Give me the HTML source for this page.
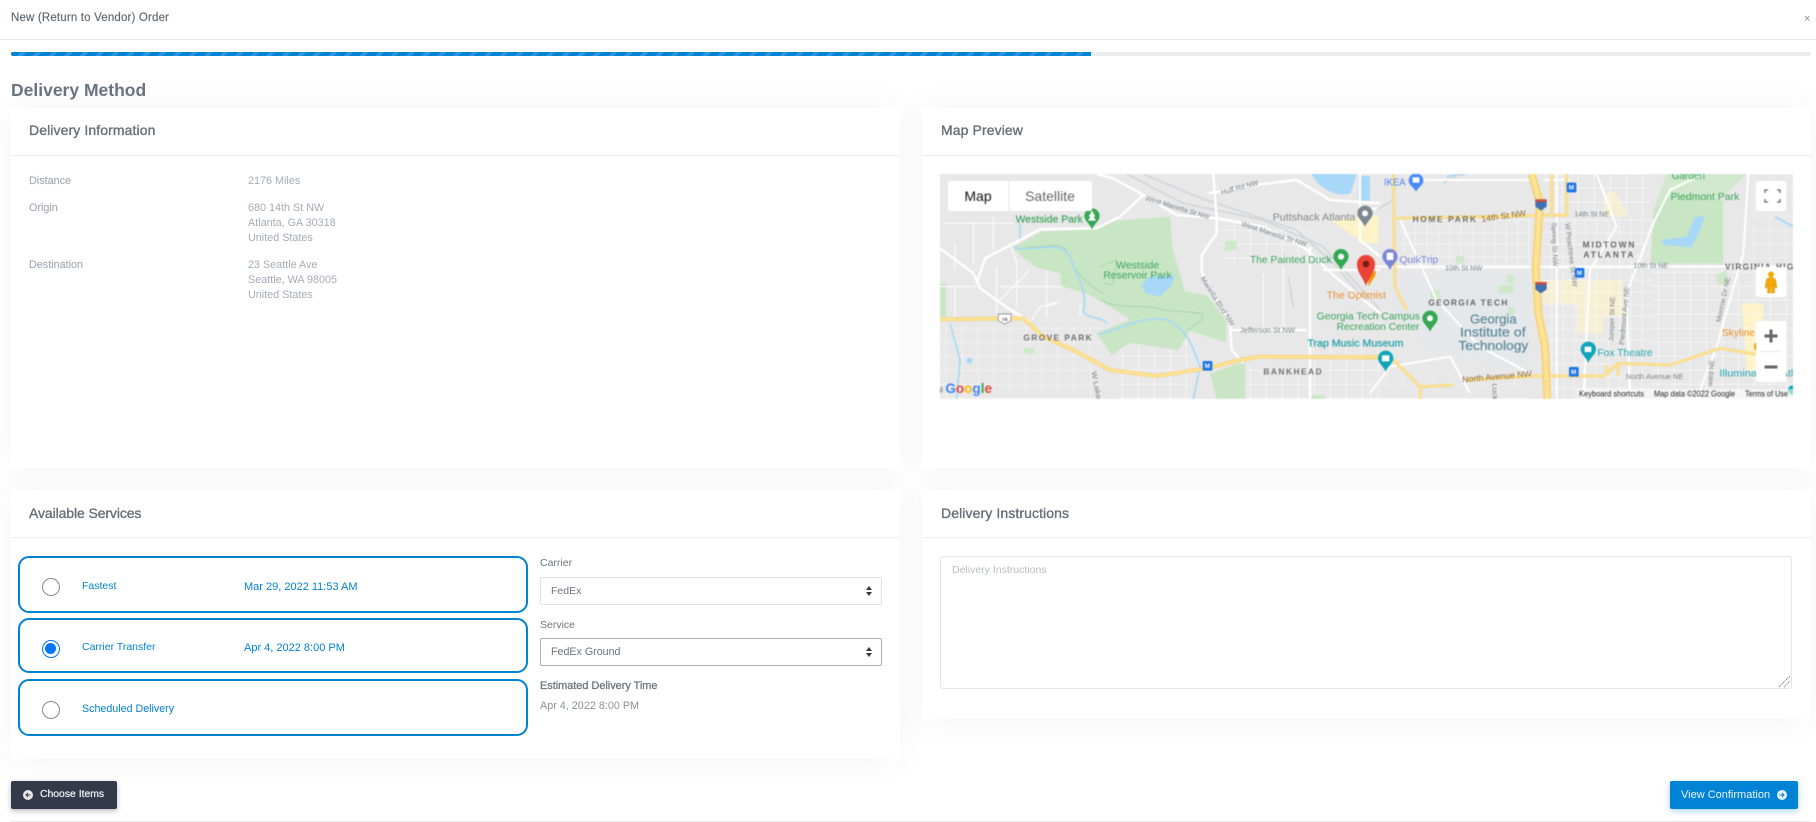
<!DOCTYPE html>
<html lang="en"><head><meta charset="utf-8"><title>New (Return to Vendor) Order</title>
<style>
html,body{margin:0;padding:0;background:#fff}
body{width:1816px;height:822px;position:relative;overflow:hidden;font-family:"Liberation Sans",sans-serif;color:#5f6a74}
.a{position:absolute}
.t{position:absolute;white-space:nowrap;line-height:16px;height:16px;font-size:11px}
.panel{position:absolute;background:#fff;box-shadow:0 0 30px 0 rgba(82,63,105,.06)}
.hr{position:absolute;height:1px;background:#ebedf2}
.h{font-size:14px;letter-spacing:.1px;color:#666f79;-webkit-text-stroke:.35px #666f79}
.lab{color:#a3acb5;font-size:10.8px;-webkit-text-stroke:.15px #a3acb5}
.val{color:#a3acb5;font-size:10.8px}
.card{position:absolute;left:18px;width:506px;border:2px solid #0082d5;border-radius:11px;height:53px;box-sizing:content-box}
.radio{position:absolute;left:42px;width:16px;height:16px;border:1px solid #8a8a8a;border-radius:50%;background:#fff}
.blue{color:#0082d5}
.sel{position:absolute;left:540px;width:340px;height:26px;border:1px solid #dfe1e6;border-radius:2px;background:#fff}
.btn{position:absolute;top:781px;height:28px;border-radius:2px;color:#fff}
svg text{font-family:"Liberation Sans",sans-serif}
</style></head><body>

<div class="t" style="left:11px;top:10px;font-size:11.5px;letter-spacing:.17px;color:#5d6770;-webkit-text-stroke:.15px #5d6770">New (Return to Vendor) Order</div>
<div class="t" style="left:1804px;top:11px;font-size:11px;color:#8c8c8c">×</div>
<div class="hr" style="left:0;top:39px;width:1816px;background:#e6e8ec"></div>

<div class="a" style="left:11px;top:52px;width:1800px;height:4px;background:#e9ecef;border-radius:2px"></div>
<div class="a" style="left:11px;top:52px;width:1080px;height:4px;border-radius:2px 0 0 2px;background:repeating-linear-gradient(135deg,#0082d5 0,#0082d5 7px,#2a96dc 7px,#2a96dc 11px)"></div>

<div class="t" style="left:11px;top:80px;height:20px;line-height:20px;font-size:17.5px;font-weight:bold;color:#6a7480">Delivery Method</div>

<div class="panel" style="left:11px;top:108px;width:889px;height:360px"></div>
<div class="panel" style="left:922px;top:108px;width:889px;height:360px"></div>
<div class="panel" style="left:11px;top:490px;width:889px;height:269px"></div>
<div class="panel" style="left:922px;top:490px;width:889px;height:229px"></div>

<div class="hr" style="left:11px;top:155px;width:889px"></div>
<div class="hr" style="left:922px;top:155px;width:889px"></div>
<div class="hr" style="left:11px;top:537px;width:889px"></div>
<div class="hr" style="left:922px;top:537px;width:889px"></div>

<div class="t h" style="left:29px;top:122px">Delivery Information</div>
<div class="t h" style="left:941px;top:122px">Map Preview</div>
<div class="t h" style="left:29px;top:505px;letter-spacing:-.1px">Available Services</div>
<div class="t h" style="left:941px;top:505px">Delivery Instructions</div>

<div class="t lab" style="left:29px;top:173px">Distance</div>
<div class="t val" style="left:248px;top:173px">2176 Miles</div>
<div class="t lab" style="left:29px;top:200px">Origin</div>
<div class="t val" style="left:248px;top:200px">680 14th St NW</div>
<div class="t val" style="left:248px;top:215px">Atlanta, GA 30318</div>
<div class="t val" style="left:248px;top:230px">United States</div>
<div class="t lab" style="left:29px;top:257px">Destination</div>
<div class="t val" style="left:248px;top:257px">23 Seattle Ave</div>
<div class="t val" style="left:248px;top:272px">Seattle, WA 98005</div>
<div class="t val" style="left:248px;top:287px">United States</div>

<svg class="a" style="left:940px;top:174px;filter:blur(.5px)" width="853" height="225" viewBox="940 174 853 225" xmlns="http://www.w3.org/2000/svg">
<defs>
<pattern id="g1" width="48" height="42" patternUnits="userSpaceOnUse"><path d="M0 0H48M0 0V42" stroke="#fff" stroke-width="3" fill="none"/></pattern>
<pattern id="g2" width="34" height="36" patternUnits="userSpaceOnUse"><path d="M0 0H34M0 0V36" stroke="#fff" stroke-width="3" fill="none"/></pattern>
</defs>
<rect x="940" y="174" width="853" height="225" fill="#e8e8e8"/>
<!-- left part, coordinates of 3x crop at 930,160 -->
<g transform="translate(930 160) scale(.33333)">
<rect x="30" y="370" width="18" height="100" fill="#c8e6c4"/>
<path d="M1200 180L1345 165V240H1290L1250 215Z" fill="#fdf2c8"/>
<rect x="1285" y="240" width="60" height="10" fill="#fdf2c8"/>
<rect x="1130" y="560" width="220" height="160" fill="url(#g1)" opacity=".9"/>
<rect x="900" y="620" width="440" height="100" fill="url(#g1)"/>
<rect x="870" y="185" width="270" height="130" fill="url(#g1)"/>
<rect x="30" y="490" width="180" height="230" fill="url(#g1)" opacity=".75"/>
<rect x="210" y="500" width="310" height="220" fill="url(#g1)" opacity=".75"/>
<rect x="560" y="520" width="220" height="200" fill="url(#g1)"/>
<path d="M40 190H250M130 190V310M190 170V270M75 250V330M75 380V470M30 380H140M200 320V460M260 300V440M300 330L210 420M350 300V470M210 380H460M350 440L390 425L330 440L305 480M240 250L260 310M450 430V470M1000 340V500M1060 320V500" stroke="#fff" stroke-width="3" fill="none"/>
<path d="M250 262L335 215L480 208L560 182L722 170L725 255L765 395L830 405L888 480V548L780 512L745 570L600 548L545 585L500 520L600 478L548 445L470 400L392 378V340L325 325L275 290Z" fill="#c8e6c4"/>
<path d="M840 640L945 605V716H860Z" fill="#c8e6c4"/>
<rect x="885" y="243" width="35" height="28" fill="#cfe8cb"/>
<rect x="282" y="563" width="30" height="18" fill="#cfe8cb"/>
<rect x="1145" y="705" width="40" height="15" fill="#cfe8cb"/>
<path d="M285 260C340 270 390 235 415 280C430 340 490 385 520 400M510 320L560 300L548 375L520 370M515 420C560 450 640 430 700 450C780 460 830 450 815 480L775 510" stroke="#7cbf83" stroke-width="2" stroke-dasharray="5 3" fill="none"/>
<path d="M250 262C300 280 395 235 420 290C440 345 475 400 460 455C480 480 520 470 530 492M505 522C560 515 620 470 700 478C760 488 790 560 810 620L790 716M60 490L90 600L80 716M270 190V240" stroke="#a8d8f8" stroke-width="5" fill="none"/>
<path d="M635 372L660 350L735 345L725 375L690 410L645 400Z" fill="#a8d8f8"/>
<path d="M1145 42H1280L1262 100C1225 112 1170 92 1145 42Z" fill="#a8d8f8"/>
<path d="M1285 48H1320V122H1285Z" fill="#a8d8f8"/>
<circle cx="118" cy="602" r="9" fill="#a8d8f8"/>
<path d="M590 42L760 130L1000 180L1180 260L1350 450M640 42L800 110L1100 210L1210 310L1350 470M1075 350L1090 440" stroke="#d3d5d8" stroke-width="5" fill="none"/>
<path d="M30 265L130 340L150 385L235 445L300 485M140 370L165 295L270 240L330 208L500 205L570 170L640 105L550 55L500 42M640 105L740 165L860 175L1000 200L1125 265L1215 350L1350 460M850 42L860 175V220L815 285V335L900 490L905 570L940 610M905 510H1130M1140 260V716M835 100L1000 72L1100 60L1200 120L1350 130M1290 42V240L1350 290M1180 330H1350M1290 150L1350 145" stroke="#fff" stroke-width="7" fill="none"/>
<path d="M30 478L280 475L340 530L430 570L540 630L680 648L830 625L930 600L990 590L1350 592" stroke="#f3d27a" stroke-width="12" fill="none"/>
<path d="M30 478L280 475L340 530L430 570L540 630L680 648L830 625L930 600L990 590L1350 592" stroke="#fde293" stroke-width="8" fill="none"/>

<g fill="#3aa35b">
<text x="257" y="188" textLength="201" lengthAdjust="spacingAndGlyphs" font-size="30" stroke="#3aa35b" stroke-width=".5">Westside Park</text>
<text x="558" y="326" textLength="130" lengthAdjust="spacingAndGlyphs" font-size="31">Westside</text>
<text x="520" y="356" textLength="205" lengthAdjust="spacingAndGlyphs" font-size="31">Reservoir Park</text>
<text x="960" y="309" textLength="245" lengthAdjust="spacingAndGlyphs" font-size="31">The Painted Duck</text>
</g>
<text x="1028" y="181" textLength="248" lengthAdjust="spacingAndGlyphs" font-size="31" fill="#80868b">Puttshack Atlanta</text>
<text x="280" y="541" textLength="205" font-size="25" fill="#6f6f6f" font-weight="bold">GROVE PARK</text>
<text x="1000" y="643" textLength="175" font-size="25" fill="#6f6f6f" font-weight="bold">BANKHEAD</text>
<g font-size="21" fill="#7b7f84">
<text transform="translate(875 104) rotate(-15)" textLength="115" lengthAdjust="spacingAndGlyphs">Huff Rd NW</text>
<text transform="translate(645 120) rotate(17)" textLength="200" lengthAdjust="spacingAndGlyphs">West Marietta St NW</text>
<text transform="translate(933 197) rotate(18)" textLength="205" lengthAdjust="spacingAndGlyphs">West Marietta St NW</text>
<text transform="translate(812 355) rotate(58)" textLength="170" lengthAdjust="spacingAndGlyphs">Marietta Blvd NW</text>
<text x="930" y="518" textLength="165" lengthAdjust="spacingAndGlyphs">Jefferson St NW</text>
<text transform="translate(485 635) rotate(80)" textLength="85" lengthAdjust="spacingAndGlyphs">W Lake</text>
</g>
<path d="M205 462H243V482L224 492L205 482Z" fill="#fff" stroke="#777" stroke-width="2"/>
<text x="224" y="483" font-size="15" fill="#555" text-anchor="middle" font-weight="bold">78</text>
<rect x="818" y="603" width="29" height="29" rx="4" fill="#1a73e8"/>
<text x="832" y="624" font-size="19" fill="#fff" text-anchor="middle" font-weight="bold">M</text>
<path d="M486 208C478 190 463 182 463 168A23 23 0 0 1 509 168C509 182 494 190 486 208Z" fill="#34a853"/>
<path d="M486 152L476 170H482L474 182H498L490 170H496Z" fill="#fff"/>
<path d="M1233 330C1225 312 1210 304 1210 290A23 23 0 0 1 1256 290C1256 304 1241 312 1233 330Z" fill="#34a853"/>
<circle cx="1233" cy="290" r="9" fill="#fff"/>
<path d="M1305 200C1297 182 1282 174 1282 160A23 23 0 0 1 1328 160C1328 174 1313 182 1305 200Z" fill="#7b868f"/>
<circle cx="1305" cy="160" r="9" fill="#fff"/>
<text x="28" y="697" font-size="22" fill="#555">il</text>
<text x="46" y="699" font-size="42" font-weight="bold" textLength="140" lengthAdjust="spacingAndGlyphs"><tspan fill="#4285f4">G</tspan><tspan fill="#ea4335">o</tspan><tspan fill="#fbbc05">o</tspan><tspan fill="#4285f4">g</tspan><tspan fill="#34a853">l</tspan><tspan fill="#ea4335">e</tspan></text>
</g>

<!-- right part, coordinates of 3x crop at 1370,160 -->
<g transform="translate(1370 160) scale(.33333)">
<path d="M100 350L480 340V640L330 610L160 560L60 420Z" fill="#e5e8eb"/>
<path d="M520 360H760V470H700V520H620V430H520ZM700 100L735 95L775 170H700Z" fill="#fdf2c8" opacity=".65"/>
<path d="M1115 430H1180V630H1130Z" fill="#fdf2c8"/>
<rect x="540" y="42" width="300" height="125" fill="url(#g1)"/>
<rect x="80" y="180" width="400" height="150" fill="url(#g2)" opacity=".85"/>
<rect x="520" y="170" width="330" height="550" fill="url(#g2)" opacity=".85"/>
<rect x="845" y="320" width="425" height="400" fill="url(#g1)"/>
<rect x="1130" y="42" width="140" height="280" fill="url(#g1)" opacity=".7"/>
<rect x="0" y="640" width="480" height="80" fill="url(#g1)" opacity=".7"/>
<path d="M890 42H1130L1060 110L850 150Z" fill="#d2e8ce"/>
<path d="M850 150L910 100L1060 120V310H842Z" fill="#c8e6c4"/>
<path d="M875 240L950 230L975 170L1005 170L985 222L965 262L880 255Z" fill="#a8d8f8"/>
<path d="M1035 345L1070 330L1075 370L1045 375Z" fill="#cfe8cb"/>
<path d="M385 375H430V400H385ZM410 345H430V370H410ZM258 288H282V310H258ZM415 440H432V465H415ZM180 390H210V415H180Z" fill="#cfe8cb"/>
<path d="M1215 170L1270 200M230 50L285 42" stroke="#a8d8f8" stroke-width="6" fill="none"/>
<path d="M70 120L20 150M270 42L220 70" stroke="#d3d5d8" stroke-width="5" fill="none"/>
<path d="M-10 320H1270M90 180L200 420L330 560L480 640M0 700L60 620L240 590L300 700M560 42V716M680 42L740 200L660 330L640 716M780 716L770 400L850 190L900 90L1000 42M1135 42L1120 280L1040 560L980 716M155 60H480M520 60H600" stroke="#fff" stroke-width="6" fill="none"/>
<path d="M70 42L75 380L110 450M-10 590H60L150 680L250 675M150 680V716M290 660L500 648H700L745 610L900 615L1050 565L1170 585M710 615V648M745 610V648M80 175L590 165M545 42V170M590 42V170" stroke="#f3d27a" stroke-width="9" fill="none"/>
<path d="M70 42L75 380L110 450M-10 590H60L150 680L250 675M150 680V716M290 660L500 648H700L745 610L900 615L1050 565L1170 585M710 615V648M745 610V648M80 175L590 165M545 42V170M590 42V170" stroke="#fde293" stroke-width="6" fill="none"/>
<path d="M485 42L510 130L497 330L505 460L525 560L532 716" stroke="#f3d27a" stroke-width="24" fill="none"/>
<path d="M485 42L510 130L497 330L505 460L525 560L532 716" stroke="#fde293" stroke-width="14" fill="none"/>
<path d="M496 118H530V140L513 152L496 140Z" fill="#3f6fb5"/><path d="M496 118H530V126H496Z" fill="#c5503f"/>
<path d="M496 366H530V388L513 400L496 388Z" fill="#3f6fb5"/><path d="M496 366H530V374H496Z" fill="#c5503f"/>
<g fill="#1a73e8"><rect x="590" y="68" width="29" height="29" rx="4"/><rect x="614" y="324" width="29" height="29" rx="4"/><rect x="597" y="621" width="29" height="29" rx="4"/></g>
<g font-size="19" fill="#fff" text-anchor="middle" font-weight="bold"><text x="604" y="89">M</text><text x="628" y="345">M</text><text x="611" y="642">M</text></g>
<text x="42" y="76" textLength="65" lengthAdjust="spacingAndGlyphs" font-size="30" fill="#4a8af4">IKEA</text>
<path d="M138 95C132 82 116 76 116 62A22 22 0 0 1 160 62C160 76 144 82 138 95Z" fill="#4a8af4"/><rect x="128" y="52" width="20" height="16" fill="#fff"/>
<text x="128" y="186" textLength="190" font-size="25" fill="#6f6f6f" font-weight="bold">HOME PARK</text>
<text transform="translate(335 186) rotate(-8)" textLength="135" lengthAdjust="spacingAndGlyphs" font-size="26" fill="#8d6a2e">14th St NW</text>
<g font-size="21" fill="#7b7f84">
<text x="613" y="170" textLength="105" lengthAdjust="spacingAndGlyphs">14th St NE</text>
<text x="225" y="332" textLength="112" lengthAdjust="spacingAndGlyphs">10th St NW</text>
<text x="790" y="324" textLength="105" lengthAdjust="spacingAndGlyphs">10th St NE</text>
<text x="768" y="657" textLength="172" lengthAdjust="spacingAndGlyphs">North Avenue NE</text>
<text transform="translate(545 188) rotate(88)" textLength="132" lengthAdjust="spacingAndGlyphs">Spring St NW</text>
<text transform="translate(585 190) rotate(83)" textLength="192" lengthAdjust="spacingAndGlyphs">W Peachtree St NW</text>
<text transform="translate(730 545) rotate(-88)" textLength="135" lengthAdjust="spacingAndGlyphs">Juniper St NE</text>
<text transform="translate(762 555) rotate(-85)" textLength="175" lengthAdjust="spacingAndGlyphs">Piedmont Ave NE</text>
<text transform="translate(1052 487) rotate(-78)" textLength="137" lengthAdjust="spacingAndGlyphs">Monroe Dr NE</text>
<text transform="translate(1026 680) rotate(-85)" textLength="80" lengthAdjust="spacingAndGlyphs">ward NE</text>
<text transform="translate(367 670) rotate(90)" textLength="50" lengthAdjust="spacingAndGlyphs">Luck</text>
</g>
<text transform="translate(277 667) rotate(-5)" textLength="210" lengthAdjust="spacingAndGlyphs" font-size="25" fill="#8d6a2e">North Avenue NW</text>
<g font-size="25" fill="#666" font-weight="bold">
<text x="638" y="263" textLength="155">MIDTOWN</text>
<text x="640" y="292" textLength="150">ATLANTA</text>
<text x="175" y="436" textLength="237">GEORGIA TECH</text>
<text x="1065" y="328" textLength="205">VIRGINIA-HIG</text>
</g>
<text x="88" y="309" textLength="117" lengthAdjust="spacingAndGlyphs" font-size="31" fill="#7b86d8">QuikTrip</text>
<path d="M60 330C52 312 37 304 37 290A23 23 0 0 1 83 290C83 304 68 312 60 330Z" fill="#7b86d8"/><rect x="50" y="278" width="20" height="22" rx="2" fill="#fff"/>
<text x="902" y="120" textLength="206" lengthAdjust="spacingAndGlyphs" font-size="31" fill="#3aa35b">Piedmont Park</text>
<text x="905" y="57" textLength="100" lengthAdjust="spacingAndGlyphs" font-size="31" fill="#3aa35b">Garden</text>
<path d="M180 515C172 497 157 489 157 475A23 23 0 0 1 203 475C203 489 188 497 180 515Z" fill="#34a853"/><circle cx="180" cy="475" r="9" fill="#fff"/>
<g font-size="40" fill="#5b8a9a" stroke="#5b8a9a" stroke-width=".6">
<text x="300" y="490" textLength="140" lengthAdjust="spacingAndGlyphs">Georgia</text>
<text x="270" y="530" textLength="197" lengthAdjust="spacingAndGlyphs">Institute of</text>
<text x="265" y="570" textLength="210" lengthAdjust="spacingAndGlyphs">Technology</text>
</g>
<path d="M655 608C647 590 632 582 632 568A23 23 0 0 1 678 568C678 582 663 590 655 608Z" fill="#12a5b8"/><rect x="644" y="560" width="20" height="16" fill="#fff"/>
<text x="682" y="588" textLength="166" lengthAdjust="spacingAndGlyphs" font-size="31" fill="#22a4b0">Fox Theatre</text>
<path d="M47 635C39 617 24 609 24 595A23 23 0 0 1 70 595C70 609 55 617 47 635Z" fill="#12a5b8"/><rect x="36" y="586" width="22" height="18" fill="#fff"/>
<text x="1055" y="528" textLength="100" lengthAdjust="spacingAndGlyphs" font-size="31" fill="#e8912f">Skyline</text>
<circle cx="1170" cy="560" r="18" fill="#f29900"/>
<text x="1048" y="650" textLength="222" lengthAdjust="spacingAndGlyphs" font-size="31" fill="#22a4b0">Illuminarium Atl</text>
<circle cx="1268" cy="690" r="14" fill="#12a5b8"/>
</g>

<!-- labels that straddle both crops -->
<g transform="translate(930 160) scale(.33333)">
<text x="1160" y="478" textLength="310" lengthAdjust="spacingAndGlyphs" font-size="31" fill="#3aa35b">Georgia Tech Campus</text>
<text x="1220" y="510" textLength="248" lengthAdjust="spacingAndGlyphs" font-size="31" fill="#3aa35b">Recreation Center</text>
<text x="1132" y="559" textLength="288" lengthAdjust="spacingAndGlyphs" font-size="30" fill="#1f9fa8" stroke="#1f9fa8" stroke-width=".6">Trap Music Museum</text>
<text x="1190" y="415" textLength="178" lengthAdjust="spacingAndGlyphs" font-size="31" fill="#e8912f">The Optimist</text>
<path d="M1316 380C1325 360 1340 350 1337 330C1322 345 1312 360 1316 380Z" fill="#f29900"/>
<path d="M1308 378C1298 350 1281 338 1281 312A27 27 0 0 1 1335 312C1335 338 1318 350 1308 378Z" fill="#ea4335"/>
<circle cx="1308" cy="312" r="10" fill="#7d1a12"/>
</g>

<!-- controls -->
<rect x="948" y="181" width="144" height="30" rx="2" fill="#fff"/>
<rect x="1008.5" y="181" width="1" height="30" fill="#e6e6e6"/>
<text x="978" y="201" font-size="14" fill="#111" text-anchor="middle">Map</text>
<text x="1050" y="201" font-size="14" fill="#666" text-anchor="middle">Satellite</text>
<rect x="1756" y="181" width="30" height="30" rx="2" fill="#fff"/>
<path d="M1765 193V190H1768M1777 190H1780V193M1780 199V202H1777M1768 202H1765V199" stroke="#666" stroke-width="1.3" fill="none"/>
<rect x="1756" y="267" width="30" height="30" rx="2" fill="#fff"/>
<circle cx="1771" cy="274.500" r="3" fill="#f2a900"/>
<path d="M1765 288L1766.500 279Q1771 276 1775.500 279L1777 288H1775.500L1774.500 284V293H1771.500V287H1770.500V293H1767.500V284L1766.500 288Z" fill="#f2a900" stroke="#c98a00" stroke-width=".4"/>
<rect x="1756" y="321" width="30" height="61" rx="2" fill="#fff"/>
<rect x="1760" y="351" width="22" height="1" fill="#e6e6e6"/>
<path d="M1771 329.500V342.500M1764.500 336H1777.500" stroke="#666" stroke-width="3" fill="none"/>
<path d="M1764.500 367H1777.500" stroke="#666" stroke-width="3"/>
<rect x="1577" y="389" width="216" height="10" fill="#fff" opacity=".55"/>
<g font-size="8" fill="#222">
<text x="1579" y="396.500" textLength="65" lengthAdjust="spacingAndGlyphs">Keyboard shortcuts</text>
<text x="1654" y="396.500" textLength="81" lengthAdjust="spacingAndGlyphs">Map data ©2022 Google</text>
<text x="1745" y="396.500" textLength="43" lengthAdjust="spacingAndGlyphs">Terms of Use</text>
</g>
</svg>

<div class="card" style="top:556px"></div>
<div class="card" style="top:618px;height:51px"></div>
<div class="card" style="top:679px"></div>
<div class="radio" style="top:578px"></div>
<div class="radio" style="top:640px;border-color:#0075ff"></div>
<div class="a" style="left:45px;top:643px;width:11px;height:11px;border-radius:50%;background:#0075ff"></div>
<div class="radio" style="top:701px"></div>
<div class="t blue" style="left:82px;top:578px;font-size:10.5px">Fastest</div>
<div class="t blue" style="left:244px;top:579px;font-size:11px">Mar 29, 2022 11:53 AM</div>
<div class="t blue" style="left:82px;top:639px;font-size:10.5px">Carrier Transfer</div>
<div class="t blue" style="left:244px;top:640px;font-size:11px">Apr 4, 2022 8:00 PM</div>
<div class="t blue" style="left:82px;top:701px;font-size:10.7px">Scheduled Delivery</div>

<div class="t" style="left:540px;top:555px;color:#6c757d;font-size:10.5px">Carrier</div>
<div class="sel" style="top:577px"></div>
<div class="t" style="left:551px;top:583px;color:#6c757d;font-size:10.5px">FedEx</div>
<svg class="a" style="left:865px;top:585px" width="8" height="12"><path d="M4 1L7 5H1ZM4 11L7 7H1Z" fill="#343a40"/></svg>
<div class="t" style="left:540px;top:617px;color:#6c757d;font-size:10.5px">Service</div>
<div class="sel" style="top:638px;border-color:#a9b0b8"></div>
<div class="t" style="left:551px;top:644px;color:#6c757d;font-size:10.7px">FedEx Ground</div>
<svg class="a" style="left:865px;top:646px" width="8" height="12"><path d="M4 1L7 5H1ZM4 11L7 7H1Z" fill="#343a40"/></svg>
<div class="t" style="left:540px;top:678px;color:#6c757d;-webkit-text-stroke:.3px #6c757d;font-size:10.9px">Estimated Delivery Time</div>
<div class="t" style="left:540px;top:698px;color:#8a939b;font-size:10.8px">Apr 4, 2022 8:00 PM</div>

<div class="a" style="left:940px;top:556px;width:850px;height:131px;border:1px solid #e2e5ec;border-radius:3px;background:#fff"></div>
<div class="t" style="left:952px;top:562px;font-size:10.5px;color:#b8bdc3">Delivery Instructions</div>
<svg class="a" style="left:1778px;top:674px" width="13" height="14"><path d="M1 13L12 2M6 13L12 7" stroke="#666" stroke-width="1" stroke-dasharray="1 1" fill="none"/></svg>

<div class="btn" style="left:11px;width:106px;background:#343a4a;box-shadow:0 2px 6px rgba(52,58,74,.35)">
<svg class="a" style="left:12px;top:9px" width="10" height="10"><circle cx="5" cy="5" r="5" fill="#e8e8e8"/><path d="M7.500 5H3M5 3L3 5L5 7" stroke="#343a4a" stroke-width="1" fill="none"/></svg>
<div class="t" style="left:29px;top:6px;font-size:10.4px;color:#f4f4f6;-webkit-text-stroke:.2px #f4f4f6">Choose Items</div>
</div>
<div class="btn" style="left:1670px;width:128px;background:#0082d5;box-shadow:0 2px 7px rgba(0,130,213,.35)">
<div class="t" style="left:11px;top:6px;font-size:11px;color:#eaf5fc">View Confirmation</div>
<svg class="a" style="left:107px;top:9px" width="10" height="10"><circle cx="5" cy="5" r="5" fill="#e4f2fb"/><path d="M2.500 5H7M5 3L7 5L5 7" stroke="#0082d5" stroke-width="1" fill="none"/></svg>
</div>
<div class="hr" style="left:11px;top:821px;width:1800px;background:#e8e8e8"></div>

</body></html>
